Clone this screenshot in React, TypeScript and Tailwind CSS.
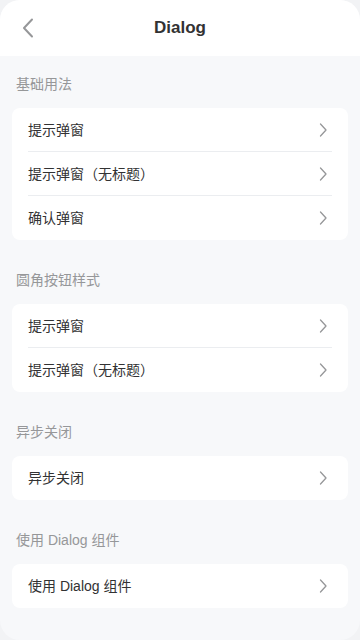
import React from "react";

const font = { fontFamily: '"Liberation Sans", "Noto Sans CJK SC", sans-serif' };

function Chevron() {
  return (
    <svg width="8" height="14" viewBox="0 0 8 14" fill="none" className="shrink-0">
      <path d="M1.5 1L7 7L1.5 13" stroke="#969799" strokeWidth="1.3" strokeLinecap="round" strokeLinejoin="round" />
    </svg>
  );
}

function Section({ title, items }: { title: string; items: string[] }) {
  return (
    <div className="mb-3">
      <div className="px-4 pt-5 pb-4 text-sm leading-4 text-[#969799]">{title}</div>
      <div className="mx-3 rounded-lg bg-white">
        {items.map((it, i) => (
          <div key={i} className="px-4">
            <div
              className={
                "flex h-11 items-center justify-between " +
                (i < items.length - 1 ? "border-b border-[#ebedf0]" : "")
              }
            >
              <span className="text-sm text-[#323233]">{it}</span>
              <span className="mr-[5px]"><Chevron /></span>
            </div>
          </div>
        ))}
      </div>
    </div>
  );
}

export default function App() {
  return (
    <div className="h-[640px] w-[360px] bg-[#f2f3f5]" style={font}>
      <div className="h-[640px] overflow-hidden rounded-[20px] bg-[#f7f8fa]">
        <div className="relative flex h-14 items-center justify-center bg-white">
          <svg width="14" height="20" viewBox="0 0 14 20" fill="none" className="absolute left-[21px] top-[18px]">
            <path d="M11 1.5L3 10L11 18.5" stroke="#969799" strokeWidth="2" strokeLinecap="round" strokeLinejoin="round" />
          </svg>
          <span className="text-[17px] font-bold text-[#323233]">Dialog</span>
        </div>
        <Section title="基础用法" items={["提示弹窗", "提示弹窗（无标题）", "确认弹窗"]} />
        <Section title="圆角按钮样式" items={["提示弹窗", "提示弹窗（无标题）"]} />
        <Section title="异步关闭" items={["异步关闭"]} />
        <Section title="使用 Dialog 组件" items={["使用 Dialog 组件"]} />
      </div>
    </div>
  );
}
